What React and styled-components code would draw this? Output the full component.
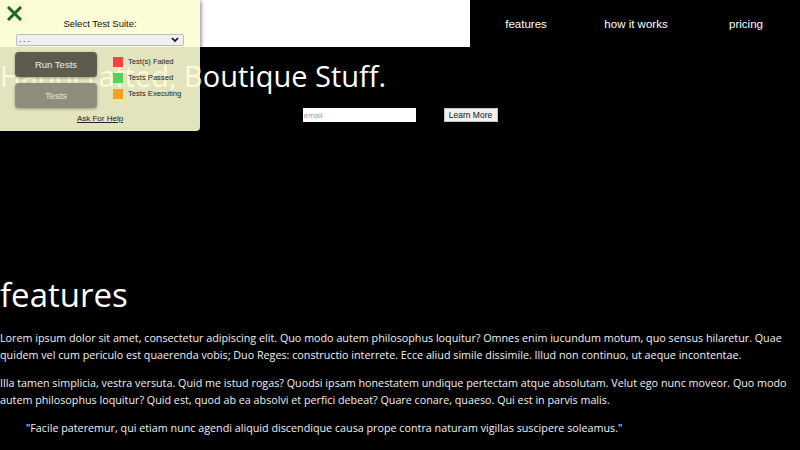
import React from "react";
import styled, { createGlobalStyle } from "styled-components";

const Global = createGlobalStyle`
  html, body { margin: 0; padding: 0; background: #000; }
  body { font-family: "Open Sans", sans-serif; color: #fff; }
  * { box-sizing: border-box; }
`;

const sans = `"Liberation Sans", Arial, sans-serif`;

const Page = styled.div`
  width: 800px;
  min-height: 450px;
  background: #000;
  overflow: hidden;
`;

const Header = styled.header`
  display: flex;
  height: 47px;
`;

const Brand = styled.div`
  width: 470px;
  background: #fff;
`;

const Nav = styled.nav`
  flex: 1;
  display: grid;
  grid-template-columns: repeat(3, 1fr);
  align-items: center;
`;

const NavLink = styled.a`
  font-family: ${sans};
  font-size: 11.5px;
  color: #fff;
  text-align: center;
  text-decoration: none;
  padding-left: 2px;
`;

const Hero = styled.section`
  height: 225px;
  padding-top: 8px;
`;

const HeroTitle = styled.h1`
  margin: 0;
  font-weight: 400;
  font-size: 29px;
  line-height: 42px;
  color: #fff;
`;

const SignUp = styled.form`
  display: flex;
  justify-content: center;
  gap: 28px;
  margin-top: 11px;
`;

const Email = styled.input`
  width: 113px;
  height: 14px;
  border: none;
  padding: 0 1px;
  font-family: ${sans};
  font-size: 8px;
  background: #fff;
  &::placeholder { color: #a0a0a0; }
`;

const LearnBtn = styled.button`
  height: 14px;
  width: 54px;
  padding: 0;
  border: 1px solid #c4c4c4;
  background: #f2f2f2;
  font-family: ${sans};
  font-size: 8.5px;
  color: #111;
`;

const Features = styled.section``;

const H2 = styled.h2`
  margin: 0 0 12px;
  font-weight: 400;
  font-size: 33px;
  line-height: 46px;
  color: #fff;
`;

const P = styled.p`
  margin: 0 0 11px;
  font-size: 10.75px;
  line-height: 17px;
  color: #f0f0f0;
`;

const Quote = styled.blockquote`
  margin: 0 0 0 26px;
  font-size: 10.75px;
  line-height: 17px;
  color: #f0f0f0;
`;

/* overlay test panel */
const Panel = styled.div`
  position: absolute;
  top: 0;
  left: 0;
  width: 200px;
  height: 131px;
  background: rgba(252, 252, 210, 0.9);
  border-bottom-right-radius: 4px;
  box-shadow: 1px 1px 4px rgba(0, 0, 0, 0.5);
  font-family: ${sans};
  color: #111;
  display: flex;
  flex-direction: column;
  align-items: center;
  padding-top: 17px;
`;

const Close = styled.div`
  position: absolute;
  top: 6px;
  left: 7px;
  width: 15px;
  height: 15px;
`;

const Label = styled.div`
  font-size: 9.5px;
  line-height: 13px;
`;

const Select = styled.select`
  margin-top: 4px;
  width: 168px;
  height: 12px;
  font-size: 7px;
  padding: 0 0 0 2px;
  border: 1px solid #bbb;
  border-radius: 2px;
  background: #f0f0f0;
  color: #333;
  appearance: none;
  background-image: url("data:image/svg+xml;utf8,<svg xmlns='http://www.w3.org/2000/svg' width='8' height='6'><path d='M1 1 L4 4 L7 1' stroke='black' stroke-width='1.6' fill='none'/></svg>");
  background-repeat: no-repeat;
  background-position: right 4px center;
`;

const Body = styled.div`
  display: flex;
  align-self: flex-start;
  margin: 6px 0 0 15px;
  gap: 16px;
`;

const Buttons = styled.div`
  display: flex;
  flex-direction: column;
  gap: 6px;
`;

const TestBtn = styled.button`
  width: 82px;
  height: 25px;
  border: none;
  border-radius: 4px;
  background: ${(p) => (p.$light ? "#8e8e7f" : "#5c5b4e")};
  color: ${(p) => (p.$light ? "#e6e6dc" : "#eeeeee")};
  font-family: ${sans};
  font-size: 9.5px;
  box-shadow: 0 1px 3px rgba(0, 0, 0, 0.35);
`;

const Legend = styled.ul`
  list-style: none;
  margin: 5px 0 0;
  padding: 0;
  display: flex;
  flex-direction: column;
  gap: 6px;
`;

const LegendItem = styled.li`
  display: flex;
  align-items: center;
  gap: 5px;
  font-size: 7.6px;
  line-height: 10px;
  color: #222;
  white-space: nowrap;
`;

const Swatch = styled.span`
  width: 10px;
  height: 10px;
  background: ${(p) => p.$c};
`;

const Help = styled.a`
  margin-top: 6px;
  font-size: 8px;
  color: #222;
  text-decoration: underline;
`;

export default function App() {
  return (
    <Page>
      <Global />
      <Header>
        <Brand />
        <Nav>
          <NavLink href="#">features</NavLink>
          <NavLink href="#">how it works</NavLink>
          <NavLink href="#">pricing</NavLink>
        </Nav>
      </Header>
      <Hero>
        <HeroTitle>Handcrafted, Boutique Stuff.</HeroTitle>
        <SignUp onSubmit={(e) => e.preventDefault()}>
          <Email placeholder="email" />
          <LearnBtn type="button">Learn More</LearnBtn>
        </SignUp>
      </Hero>
      <Features>
        <H2>features</H2>
        <P>
          Lorem ipsum dolor sit amet, consectetur adipiscing elit. Quo modo autem philosophus loquitur? Omnes enim iucundum motum, quo sensus hilaretur. Quae quidem vel cum periculo est quaerenda vobis; Duo Reges: constructio interrete. Ecce aliud simile dissimile. Illud non continuo, ut aeque incontentae.
        </P>
        <P>
          Illa tamen simplicia, vestra versuta. Quid me istud rogas? Quodsi ipsam honestatem undique pertectam atque absolutam. Velut ego nunc moveor. Quo modo autem philosophus loquitur? Quid est, quod ab ea absolvi et perfici debeat? Quare conare, quaeso. Qui est in parvis malis.
        </P>
        <Quote>
          "Facile pateremur, qui etiam nunc agendi aliquid discendique causa prope contra naturam vigillas suscipere soleamus."
        </Quote>
      </Features>
      <Panel>
        <Close>
          <svg width="15" height="15" viewBox="0 0 15 15">
            <path d="M2 2 L13 13 M13 2 L2 13" stroke="#1b6a1b" strokeWidth="3" strokeLinecap="square" />
          </svg>
        </Close>
        <Label>Select Test Suite:</Label>
        <Select defaultValue="none">
          <option value="none">- - -</option>
        </Select>
        <Body>
          <Buttons>
            <TestBtn>Run Tests</TestBtn>
            <TestBtn $light>Tests</TestBtn>
          </Buttons>
          <Legend>
            <LegendItem><Swatch $c="#f0463c" />Test(s) Failed</LegendItem>
            <LegendItem><Swatch $c="#55d05a" />Tests Passed</LegendItem>
            <LegendItem><Swatch $c="#f5a01e" />Tests Executing</LegendItem>
          </Legend>
        </Body>
        <Help href="#">Ask For Help</Help>
      </Panel>
    </Page>
  );
}
